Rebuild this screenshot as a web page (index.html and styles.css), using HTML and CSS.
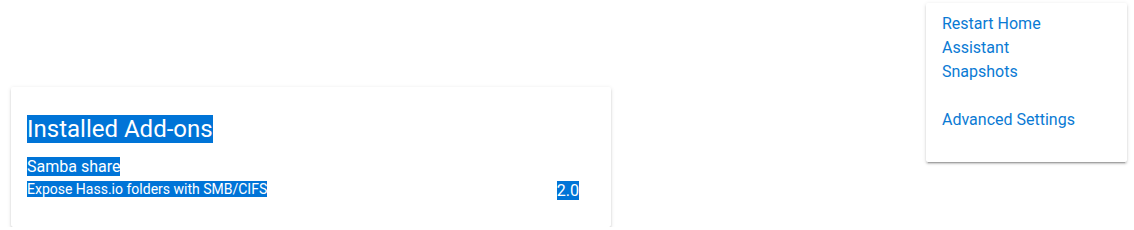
FILE: index.html
```html
<!DOCTYPE html>
<html lang="en">
<head>
  <meta charset="UTF-8" />
  <title>Hass.io</title>
  <link rel="stylesheet" href="styles.css">
</head>
<body>
  <div class="page">
    <div class="addons card">
      <h1 class="title"><span class="sel">Installed Add-ons</span></h1>
      <div class="addon">
        <div class="addon-info">
          <div class="addon-name"><span class="sel">Samba share</span></div>
          <div class="addon-desc"><span class="sel">Expose Hass.io folders with SMB/CIFS</span></div>
        </div>
        <div class="addon-version"><span class="sel">2.0</span></div>
      </div>
    </div>

    <div class="menu card">
      <a href="#">Restart Home Assistant</a>
      <a href="#">Snapshots</a>
      <div class="spacer"></div>
      <a href="#">Advanced Settings</a>
    </div>
  </div>
</body>
</html>
```

FILE: styles.css
```css
body {
  margin: 0;
  background-color: #fff;
  font-family: Roboto, 'Noto Sans', sans-serif;
  color: #212121;
}

.page {
  display: flex;
  justify-content: space-between;
  align-items: flex-start;
  padding: 3px 7px 0 11px;
}

.card {
  background-color: #fff;
  border-radius: 2px;
  box-shadow: 0 2px 2px 0 rgba(0, 0, 0, 0.14), 0 1px 4px 0 rgba(0, 0, 0, 0.12), 0 3px 1px -2px rgba(0, 0, 0, 0.2);
}

.sel {
  background-color: #0074d7;
  color: #fff;
}

.addons {
  width: 568px;
  margin-top: 84px;
  padding: 28px 16px 30px 16px;
}

.title {
  margin: 0 0 14px 0;
  font-size: 24px;
  font-weight: 400;
  line-height: 28px;
}

.addon {
  display: flex;
  justify-content: space-between;
}

.addon-name {
  font-size: 16px;
  line-height: 20px;
  margin-bottom: 4px;
}

.addon-desc {
  font-size: 14px;
  line-height: 16px;
}

.addon-version {
  align-self: flex-end;
  font-size: 16px;
  line-height: 19px;
  margin-right: 16px;
  margin-bottom: -3px;
}

.menu {
  width: 169px;
  display: flex;
  flex-direction: column;
  padding: 9px 16px 30px 16px;
}

.menu a {
  color: #0a7ad4;
  text-decoration: none;
  font-size: 16px;
  line-height: 24px;
}

.spacer { height: 24px; }
```
